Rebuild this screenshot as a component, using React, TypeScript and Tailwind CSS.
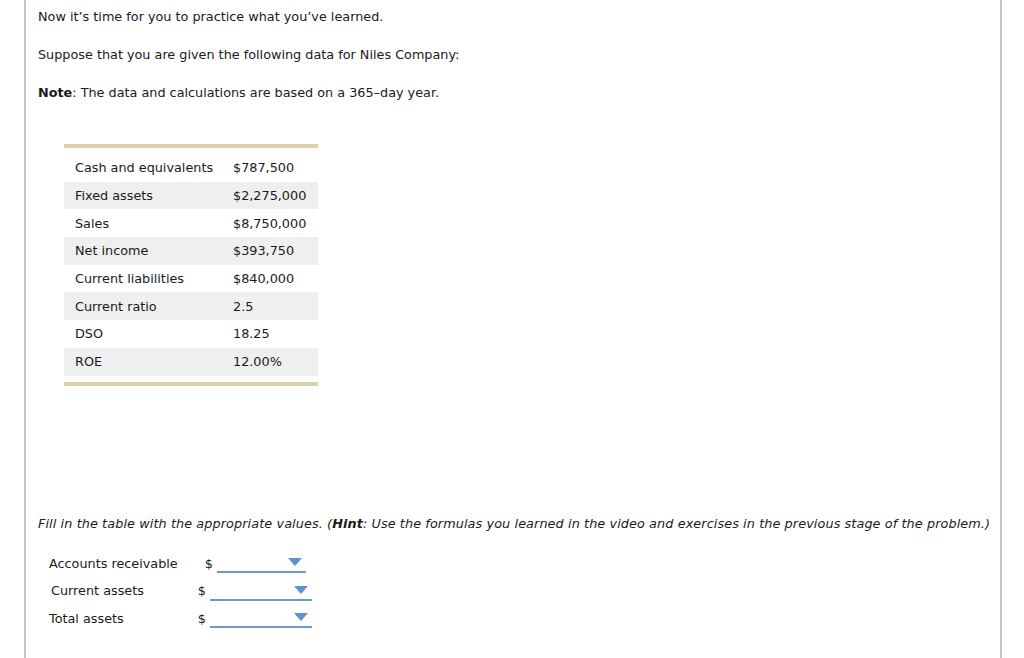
import React from "react";

const rows: [string, string][] = [
  ["Cash and equivalents", "$787,500"],
  ["Fixed assets", "$2,275,000"],
  ["Sales", "$8,750,000"],
  ["Net income", "$393,750"],
  ["Current liabilities", "$840,000"],
  ["Current ratio", "2.5"],
  ["DSO", "18.25"],
  ["ROE", "12.00%"],
];

function Dropdown({ width }: { width: string }) {
  return (
    <div className={`relative h-[20px] border-b-2 border-[#6a9ad0] ${width}`}>
      <svg
        className="absolute right-[4px] top-[5px]"
        width="14"
        height="8"
        viewBox="0 0 14 8"
      >
        <polygon points="0,0 14,0 7,8" fill="#5f93cc" />
      </svg>
    </div>
  );
}

export default function App() {
  return (
    <div
      className="min-h-[658px] bg-white text-[12.8px] text-[#1a1a1a]"
      style={{ fontFamily: "Verdana, 'DejaVu Sans', sans-serif" }}
    >
      <div className="ml-[24px] w-[978px] min-h-[658px] border-x-2 border-[#c4c4c4] pl-[12px] pt-[8px]">
        <p className="leading-[18px]">Now it’s time for you to practice what you’ve learned.</p>
        <p className="leading-[18px] mt-[20px]">
          Suppose that you are given the following data for Niles Company:
        </p>
        <p className="leading-[18px] mt-[20px]">
          <span className="font-bold">Note</span>: The data and calculations are based on a 365–day year.
        </p>

        <div className="ml-[26px] mt-[42px] w-[254px] border-y-4 border-[#dcd1a8] py-[6px]">
          {rows.map(([label, value], i) => (
            <div
              key={label}
              className={`flex h-[27.7px] items-center ${i % 2 === 1 ? "bg-[#efefef]" : "bg-white"}`}
            >
              <div className="w-[169px] pl-[11px]">{label}</div>
              <div>{value}</div>
            </div>
          ))}
        </div>

        <p className="italic leading-[18px] mt-[129px] tracking-[0.1px]">
          Fill in the table with the appropriate values. (<span className="font-bold">Hint</span>: Use the
          formulas you learned in the video and exercises in the previous stage of the problem.)
        </p>

        <div className="mt-[17px] flex flex-col">
          <div className="flex h-[27.5px] items-center">
            <div className="w-[165px] pl-[11px]">Accounts receivable</div>
            <div className="w-[14px] text-right pr-[4px]">$</div>
            <Dropdown width="w-[89px]" />
          </div>
          <div className="flex h-[27.5px] items-center">
            <div className="w-[158px] pl-[13px]">Current assets</div>
            <div className="w-[14px] text-right pr-[4px]">$</div>
            <Dropdown width="w-[102px]" />
          </div>
          <div className="flex h-[27.5px] items-center">
            <div className="w-[158px] pl-[11px]">Total assets</div>
            <div className="w-[14px] text-right pr-[4px]">$</div>
            <Dropdown width="w-[102px]" />
          </div>
        </div>
      </div>
    </div>
  );
}
